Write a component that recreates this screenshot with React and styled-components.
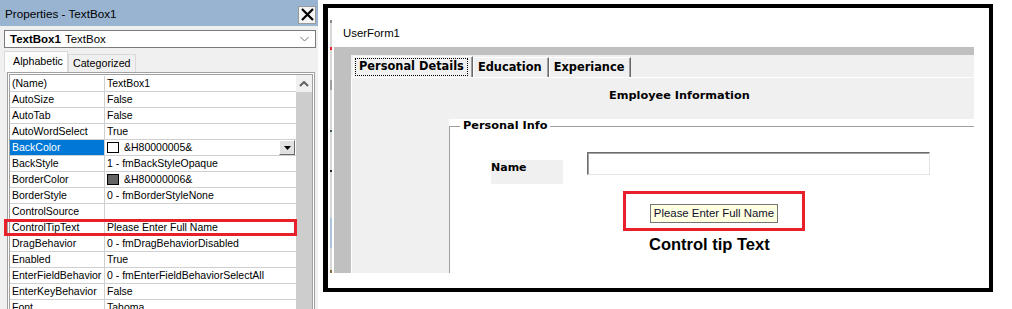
import React from 'react';
import styled, { createGlobalStyle } from 'styled-components';

const GlobalStyle = createGlobalStyle`
  html, body {
    margin: 0;
    padding: 0;
    background: #fff;
  }
  body {
    width: 1012px;
    height: 309px;
    overflow: hidden;
    font-family: "Liberation Sans", Arial, sans-serif;
    color: #000;
  }
`;

const Screen = styled.div`
  display: flex;
  align-items: flex-start;
  gap: 5px;
  height: 309px;
`;

/* ---------- Properties window ---------- */

const PropsWindow = styled.div`
  width: 318px;
  height: 309px;
  background: #f0f0f0;
  display: flex;
  flex-direction: column;
  overflow: hidden;
`;

const TitleBar = styled.div`
  height: 26px;
  flex-shrink: 0;
  background: #99b4d1;
  display: flex;
  align-items: center;
  justify-content: space-between;
  padding: 0 2px 0 5px;
  font-size: 11.7px;
`;

const CloseButton = styled.div`
  width: 18px;
  height: 18px;
  margin-top: 3px;
  box-sizing: border-box;
  background: #f4f4f4;
  border: 1px solid #9a9a9a;
  display: flex;
  align-items: center;
  justify-content: center;
`;

const Combo = styled.div`
  height: 18px;
  flex-shrink: 0;
  margin: 4px 2px 0 4px;
  box-sizing: border-box;
  background: #fff;
  border: 1px solid #7a7a7a;
  display: flex;
  align-items: center;
  padding: 0 6px 0 5px;
  font-size: 11.5px;

  b {
    font-weight: 700;
    margin-right: 4px;
  }

  svg {
    margin-left: auto;
  }
`;

const TabRow = styled.div`
  height: 21px;
  flex-shrink: 0;
  margin: 3px 0 0 4px;
  display: flex;
  align-items: flex-end;
`;

const PropTab = styled.div`
  height: ${p => (p.$active ? '21px' : '18px')};
  box-sizing: border-box;
  padding: 0 4px 0 ${p => (p.$active ? '8px' : '4px')};
  border: 1px solid #d9d9d9;
  border-bottom: none;
  background: ${p => (p.$active ? '#fcfcfc' : '#f0f0f0')};
  font-size: 10.7px;
  line-height: ${p => (p.$active ? '18px' : '16px')};
`;

const Grid = styled.div`
  flex: 1;
  margin: 0 3px 0 7px;
  border: 3px double #a0a0a0;
  border-bottom: none;
  background: #fff;
  display: flex;
`;

const Rows = styled.div`
  flex: 1;
  padding-top: 1px;
  display: flex;
  flex-direction: column;
`;

const Row = styled.div`
  position: relative;
  height: 16px;
  flex-shrink: 0;
  box-sizing: border-box;
  border-bottom: 1px solid #d0d0d0;
  display: grid;
  grid-template-columns: 95px 1fr;
  font-size: 10.5px;
  line-height: 15px;

  &::after {
    content: '';
    display: ${p => (p.$highlight ? 'block' : 'none')};
    position: absolute;
    left: -6px;
    right: -1px;
    top: -1px;
    bottom: -1px;
    border: 3px solid #e8202a;
    z-index: 2;
  }
`;

const NameCell = styled.div`
  border-right: 1px solid #d0d0d0;
  padding-left: 2px;
  white-space: nowrap;
  overflow: hidden;
  background: ${p => (p.$selected ? '#0078d7' : 'transparent')};
  color: ${p => (p.$selected ? '#fff' : '#000')};
`;

const ValueCell = styled.div`
  padding-left: 2px;
  display: flex;
  align-items: center;
  white-space: nowrap;
  overflow: hidden;
`;

const Swatch = styled.span`
  width: 12px;
  height: 11px;
  box-sizing: border-box;
  border: 1px solid #000;
  background: ${p => p.$color};
  margin-right: 5px;
  flex-shrink: 0;
`;

const DropButton = styled.span`
  margin-left: auto;
  margin-right: 1px;
  width: 16px;
  height: 15px;
  box-sizing: border-box;
  background: #e1e1e1;
  border: 1px solid;
  border-color: #fff #696969 #696969 #fff;
  display: flex;
  align-items: center;
  justify-content: center;
`;

const Scrollbar = styled.div`
  width: 16px;
  background: #cdcdcd;
  display: flex;
  flex-direction: column;
`;

const ScrollArrow = styled.div`
  height: 17px;
  background: #f0f0f0;
  display: flex;
  align-items: center;
  justify-content: center;
`;

/* ---------- Captured user form ---------- */

const Capture = styled.div`
  margin-top: 4px;
  width: 670px;
  height: 288px;
  box-sizing: border-box;
  border: 4px solid #000;
  border-left-width: 5px;
  background: #fff;
  display: flex;
`;

const EditorEdge = styled.div`
  width: 6px;
  flex-shrink: 0;
  display: flex;
  justify-content: center;
`;

const EdgeLine = styled.div`
  width: 2px;
  height: 253px;
  margin-top: 12px;
  background: linear-gradient(
    to bottom,
    #8a8a8a 0 3px,
    #d8d8d8 3px 27px,
    #e8202a 27px 30px,
    #d8d8d8 30px 60px,
    #a0a0a0 60px 70px,
    #d8d8d8 70px 110px,
    #3b5b5b 110px 112px,
    #d8d8d8 112px 150px,
    #222 150px 152px,
    #d8d8d8 152px 198px,
    #a9c4dc 198px 228px,
    #d8d8d8 228px 250px,
    #8a6a3a 250px 253px
  );
`;

const UserForm = styled.div`
  width: 640px;
  display: flex;
  flex-direction: column;
`;

const FormTitle = styled.div`
  height: 39px;
  box-sizing: border-box;
  padding: 18px 0 0 9px;
  font-size: 11.4px;
  line-height: 14px;
`;

const FormBody = styled.div`
  height: 226px;
  box-sizing: border-box;
  background: #c0c0c0;
  padding: 8px 0 0 17px;
  display: flex;
`;

const MultiPage = styled.div`
  flex: 1;
  display: flex;
  flex-direction: column;
  font-family: "DejaVu Sans", Verdana, sans-serif;
`;

const TabStrip = styled.div`
  height: 22px;
  flex-shrink: 0;
  background: #f0f0f0;
  padding-left: 2px;
  display: flex;
  align-items: flex-end;
`;

const PageTab = styled.div`
  height: ${p => (p.$active ? '21px' : '20px')};
  box-sizing: border-box;
  padding: ${p => (p.$active ? '1px 4px 0 1px' : '2px 6px 0 4px')};
  border-top: 1px solid #fff;
  border-left: 1px solid #fff;
  border-right: 1px solid #696969;
  box-shadow: inset -1px 0 #a0a0a0;
  font-size: 11.4px;
  font-weight: 700;
  line-height: 15px;
  white-space: nowrap;
`;

const FocusRect = styled.span`
  display: block;
  height: 18px;
  box-sizing: border-box;
  border: 1px dotted #000;
  padding: 0 3px;
  line-height: 15px;
`;

const Page = styled.div`
  flex: 1;
  background: #f0f0f0;
  border-top: 1px solid #fff;
  border-left: 1px solid #fff;
  display: flex;
  flex-direction: column;
`;

const PageHeading = styled.div`
  height: 41px;
  flex-shrink: 0;
  box-sizing: border-box;
  padding: 11px 0 0 257px;
  font-size: 11.3px;
  font-weight: 700;
  line-height: 14px;
`;

const PageBody = styled.div`
  flex: 1;
  display: flex;
`;

const Gutter = styled.div`
  width: 97px;
  flex-shrink: 0;
`;

const FrameArea = styled.div`
  flex: 1;
  background: #fff;
  display: flex;
  flex-direction: column;
`;

const Frame = styled.fieldset`
  flex: 1;
  min-width: 0;
  margin: 0;
  padding: 0;
  border: none;
  border-top: 1px solid #a0a0a0;
  border-left: 1px solid #a0a0a0;
  display: flex;
  flex-direction: column;
  align-items: flex-start;
`;

const FrameCaption = styled.legend`
  margin-left: 10px;
  padding: 0 3px;
  font-size: 11.3px;
  font-weight: 700;
  line-height: 14px;
`;

const FieldRow = styled.div`
  margin-top: 19px;
  padding-left: 41px;
  display: flex;
  align-items: flex-start;
`;

const FieldLabel = styled.div`
  width: 72px;
  height: 24px;
  margin-top: 8px;
  background: #f0f0f0;
  font-size: 11px;
  font-weight: 700;
  line-height: 16px;
`;

const TextInput = styled.div`
  width: 343px;
  height: 23px;
  margin-left: 24px;
  box-sizing: border-box;
  background: #fff;
  border: 1px solid;
  border-color: #6d6d6d #e3e3e3 #e3e3e3 #6d6d6d;
  box-shadow: inset 1px 1px #a0a0a0;
`;

const TipCallout = styled.div`
  width: 182px;
  height: 40px;
  margin: 7px 0 0 173px;
  box-sizing: border-box;
  border: 3px solid #e8202a;
  padding-top: 10px;
  display: flex;
  justify-content: center;
  align-items: flex-start;
`;

const Tooltip = styled.div`
  height: 19px;
  box-sizing: border-box;
  padding: 0 3px;
  background: #ffffe1;
  border: 1px solid #767676;
  font-family: "Liberation Sans", Arial, sans-serif;
  font-size: 11.4px;
  line-height: 17px;
  color: #101030;
  white-space: nowrap;
`;

const TipLabel = styled.div`
  margin: 4px 0 0 199px;
  font-family: "Liberation Sans", Arial, sans-serif;
  font-size: 16.5px;
  font-weight: 700;
  line-height: 18px;
  white-space: nowrap;
`;

const properties = [
  { name: '(Name)', value: 'TextBox1' },
  { name: 'AutoSize', value: 'False' },
  { name: 'AutoTab', value: 'False' },
  { name: 'AutoWordSelect', value: 'True' },
  { name: 'BackColor', value: '&H80000005&', swatch: '#fff', selected: true, dropdown: true },
  { name: 'BackStyle', value: '1 - fmBackStyleOpaque' },
  { name: 'BorderColor', value: '&H80000006&', swatch: '#646464' },
  { name: 'BorderStyle', value: '0 - fmBorderStyleNone' },
  { name: 'ControlSource', value: '' },
  { name: 'ControlTipText', value: 'Please Enter Full Name', highlight: true },
  { name: 'DragBehavior', value: '0 - fmDragBehaviorDisabled' },
  { name: 'Enabled', value: 'True' },
  { name: 'EnterFieldBehavior', value: '0 - fmEnterFieldBehaviorSelectAll' },
  { name: 'EnterKeyBehavior', value: 'False' },
  { name: 'Font', value: 'Tahoma' },
];

const PropertiesPanel = () => (
  <PropsWindow>
    <TitleBar>
      <span>Properties - TextBox1</span>
      <CloseButton>
        <svg width="13" height="13" viewBox="0 0 13 13">
          <path d="M1 1 L12 12 M12 1 L1 12" stroke="#000" strokeWidth="2.2" />
        </svg>
      </CloseButton>
    </TitleBar>

    <Combo>
      <b>TextBox1</b>TextBox
      <svg width="9" height="6" viewBox="0 0 9 6">
        <polyline points="0.5,1 4.5,5 8.5,1" fill="none" stroke="#707070" strokeWidth="1" />
      </svg>
    </Combo>

    <TabRow>
      <PropTab $active>Alphabetic</PropTab>
      <PropTab>Categorized</PropTab>
    </TabRow>

    <Grid>
      <Rows>
        {properties.map(p => (
          <Row key={p.name} $highlight={p.highlight}>
            <NameCell $selected={p.selected}>{p.name}</NameCell>
            <ValueCell>
              {p.swatch && <Swatch $color={p.swatch} />}
              {p.value}
              {p.dropdown && (
                <DropButton>
                  <svg width="7" height="4" viewBox="0 0 7 4">
                    <polygon points="0,0 7,0 3.5,4" fill="#000" />
                  </svg>
                </DropButton>
              )}
            </ValueCell>
          </Row>
        ))}
      </Rows>
      <Scrollbar>
        <ScrollArrow>
          <svg width="10" height="6" viewBox="0 0 10 6">
            <polyline points="1,5 5,1 9,5" fill="none" stroke="#606060" strokeWidth="2" />
          </svg>
        </ScrollArrow>
      </Scrollbar>
    </Grid>
  </PropsWindow>
);

const FormPreview = () => (
  <Capture>
    <EditorEdge>
      <EdgeLine />
    </EditorEdge>
    <UserForm>
      <FormTitle>UserForm1</FormTitle>
      <FormBody>
        <MultiPage>
          <TabStrip>
            <PageTab $active>
              <FocusRect>Personal Details</FocusRect>
            </PageTab>
            <PageTab>Education</PageTab>
            <PageTab>Experiance</PageTab>
          </TabStrip>
          <Page>
            <PageHeading>Employee Information</PageHeading>
            <PageBody>
              <Gutter />
              <FrameArea>
                <Frame>
                  <FrameCaption>Personal Info</FrameCaption>
                  <FieldRow>
                    <FieldLabel>Name</FieldLabel>
                    <TextInput />
                  </FieldRow>
                  <TipCallout>
                    <Tooltip>Please Enter Full Name</Tooltip>
                  </TipCallout>
                  <TipLabel>Control tip Text</TipLabel>
                </Frame>
              </FrameArea>
            </PageBody>
          </Page>
        </MultiPage>
      </FormBody>
    </UserForm>
  </Capture>
);

export default function App() {
  return (
    <>
      <GlobalStyle />
      <Screen>
        <PropertiesPanel />
        <FormPreview />
      </Screen>
    </>
  );
}
